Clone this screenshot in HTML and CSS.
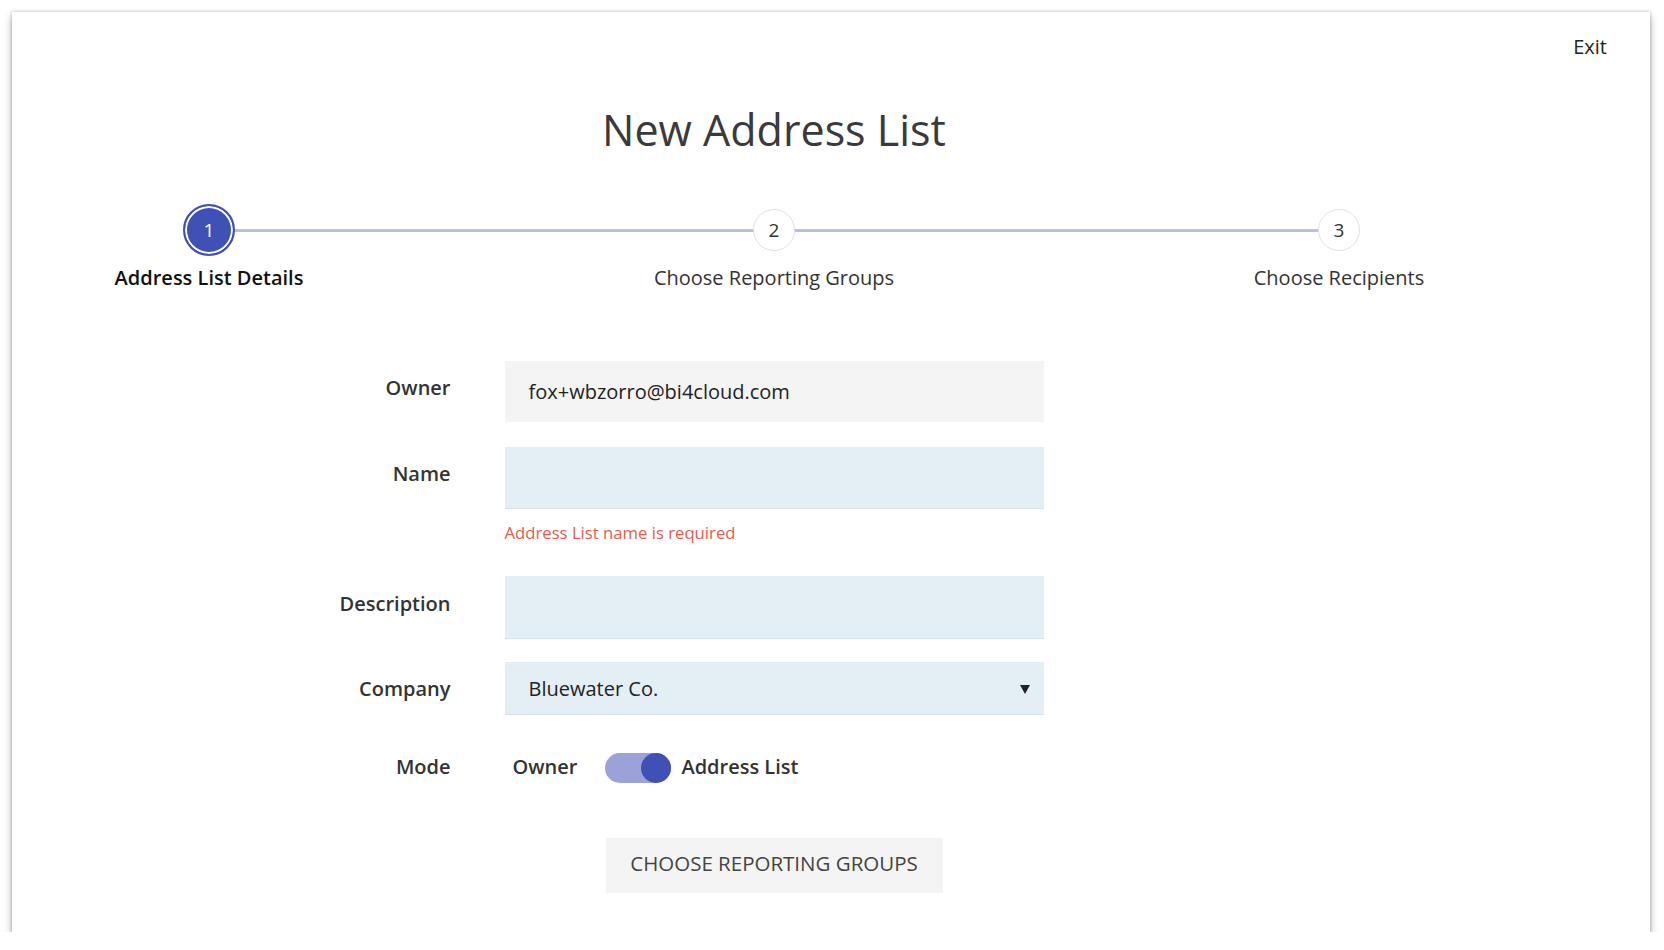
FILE: index.html
```html
<!DOCTYPE html>
<html lang="en">
<head>
  <meta charset="UTF-8" />
  <title>New Address List</title>
  <link rel="stylesheet" href="styles.css">
</head>
<body>
  <div class="card">
    <div class="topbar">
      <a class="exit" href="#">Exit</a>
    </div>

    <div class="content">
      <h1 class="title">New Address List</h1>

      <div class="stepper">
        <div class="step active">
          <div class="step-num">1</div>
          <div class="step-label">Address List Details</div>
        </div>
        <div class="step-line"></div>
        <div class="step">
          <div class="step-num">2</div>
          <div class="step-label">Choose Reporting Groups</div>
        </div>
        <div class="step-line"></div>
        <div class="step">
          <div class="step-num">3</div>
          <div class="step-label">Choose Recipients</div>
        </div>
      </div>

      <form class="form" onsubmit="return false">
        <div class="row row-owner">
          <label class="field-label">Owner</label>
          <div class="input input-readonly">fox+wbzorro@bi4cloud.com</div>
        </div>

        <div class="row row-name">
          <label class="field-label">Name</label>
          <input class="input" type="text">
        </div>
        <div class="row row-error">
          <span></span>
          <div class="error">Address List name is required</div>
        </div>

        <div class="row row-desc">
          <label class="field-label">Description</label>
          <input class="input input-tall" type="text">
        </div>

        <div class="row row-company">
          <label class="field-label">Company</label>
          <div class="input select">
            <span>Bluewater Co.</span>
            <span class="caret"></span>
          </div>
        </div>

        <div class="row row-mode">
          <label class="field-label">Mode</label>
          <div class="mode">
            <span class="mode-opt">Owner</span>
            <span class="toggle"><span class="thumb"></span></span>
            <span class="mode-opt">Address List</span>
          </div>
        </div>

        <div class="row row-actions">
          <span></span>
          <div class="actions">
            <button class="next-btn" type="button">Choose Reporting Groups</button>
          </div>
        </div>
      </form>
    </div>
  </div>
</body>
</html>
```

FILE: styles.css
```css
body {
  margin: 0;
  padding: 12px 14px 0 12px;
  background: #fff;
  font-family: "Open Sans", "Noto Sans", sans-serif;
  color: #333;
}
.card {
  height: 920px;
  background: #fff;
  box-shadow: 0 4px 8px rgba(0, 0, 0, 0.3), 0 0 3px rgba(0, 0, 0, 0.25);
}
.topbar {
  display: flex;
  justify-content: flex-end;
  padding: 22px 43px 0 0;
  height: 26px;
}
.exit {
  font-size: 20px;
  line-height: 26px;
  color: #222;
  text-decoration: none;
}
.content {
  padding-right: 114px;
}
.title {
  margin: 44px 0 0;
  font-size: 43px;
  line-height: 52px;
  font-weight: 400;
  color: #3a3a3a;
  text-align: center;
}

/* stepper */
.stepper {
  display: flex;
  align-items: flex-start;
  padding: 0 171px;
  margin-top: 48px;
}
.step {
  width: 52px;
  display: flex;
  flex-direction: column;
  align-items: center;
  position: relative;
  z-index: 1;
}
.step-num {
  width: 40px;
  height: 40px;
  margin: 5px 0;
  border: 1px solid #e2e2e2;
  border-radius: 50%;
  background: #fff;
  display: flex;
  align-items: center;
  justify-content: center;
  font-size: 19px;
  color: #333;
}
.step.active .step-num {
  width: 48px;
  height: 48px;
  margin: 0;
  border: 2px solid #3f51b5;
  box-shadow: inset 0 0 0 2px #fff;
  background: #3f51b5;
  color: #fff;
}
.step-label {
  margin-top: 9px;
  white-space: nowrap;
  font-size: 20px;
  line-height: 26px;
  color: #333;
}
.step.active .step-label {
  font-weight: 600;
  color: #111;
}
.step-line {
  flex: 1;
  height: 3px;
  margin: 25px -6px 0;
  background: #b9bee3;
}

/* form */
.form {
  margin-top: 70px;
}
.row {
  display: grid;
  grid-template-columns: 1fr 539px 1fr;
  column-gap: 54px;
  align-items: center;
}
.field-label {
  justify-self: end;
  font-size: 20px;
  font-weight: 600;
  color: #333;
  margin-top: -9px;
}
.input {
  box-sizing: border-box;
  width: 539px;
  height: 62px;
  margin: 0;
  padding: 0 24px;
  border: none;
  border-bottom: 1px solid #d5e3ec;
  background: #e3eef5;
  font-family: inherit;
  font-size: 20px;
  color: #222;
  outline: none;
}
.input-tall {
  height: 63px;
}
.input-readonly {
  height: 61px;
  display: flex;
  align-items: center;
  background: #f4f4f4;
  border-bottom: none;
}
.row-owner {
  margin-bottom: 25px;
}
.row-error {
  margin-top: 12px;
  margin-bottom: 31px;
}
.error {
  font-size: 16.7px;
  line-height: 24px;
  color: #ea5a4c;
}
.row-desc {
  margin-bottom: 23px;
}
.select {
  height: 53px;
  display: flex;
  align-items: center;
  justify-content: space-between;
  padding-right: 14px;
}
.row-company .field-label {
  margin-top: 0;
}
.caret {
  width: 0;
  height: 0;
  border-left: 5px solid transparent;
  border-right: 5px solid transparent;
  border-top: 9px solid #222;
  margin-top: 3px;
}
.row-company {
  margin-bottom: 38px;
}
.row-mode .field-label {
  margin-top: -4px;
}
.mode {
  display: flex;
  align-items: center;
  padding-left: 8px;
  height: 30px;
}
.mode-opt {
  font-size: 20px;
  font-weight: 600;
  color: #333;
  margin-top: -4px;
}
.toggle {
  width: 66px;
  height: 30px;
  margin: 0 10px 0 28px;
  border-radius: 15px;
  background: #9aa2d7;
  display: flex;
  justify-content: flex-end;
}
.thumb {
  width: 30px;
  height: 30px;
  border-radius: 50%;
  background: #3f51b5;
}
.row-actions {
  margin-top: 55px;
}
.actions {
  display: flex;
  justify-content: center;
}
.next-btn {
  width: 337px;
  height: 55px;
  border: none;
  background: #f4f4f4;
  font-family: inherit;
  font-size: 20.5px;
  text-transform: uppercase;
  color: #444;
  padding: 0 0 6px;
  cursor: pointer;
}
```
